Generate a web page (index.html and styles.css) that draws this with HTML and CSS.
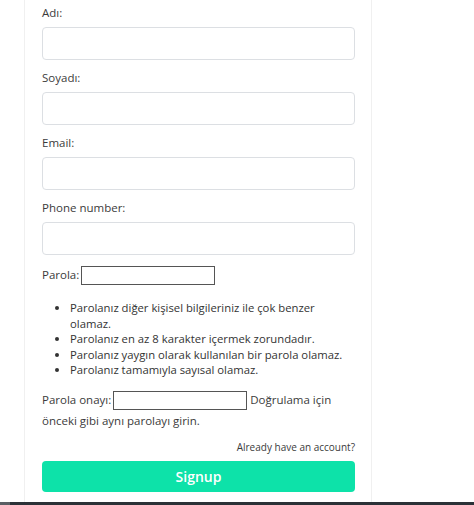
FILE: index.html
```html
<!DOCTYPE html>
<html lang="tr">
<head>
<meta charset="utf-8">
<title>Signup</title>
<link rel="stylesheet" href="styles.css">
</head>
<body>
<div class="page">
  <main class="card">
    <form class="form">
      <div class="field">
        <label class="field-label" for="ad">Adı:</label>
        <input class="text-input" id="ad" type="text">
      </div>
      <div class="field">
        <label class="field-label" for="soyad">Soyadı:</label>
        <input class="text-input" id="soyad" type="text">
      </div>
      <div class="field">
        <label class="field-label" for="email">Email:</label>
        <input class="text-input" id="email" type="email">
      </div>
      <div class="field">
        <label class="field-label" for="phone">Phone number:</label>
        <input class="text-input" id="phone" type="text">
      </div>
      <p class="pw-row"><label for="pw1">Parola:</label><input class="plain-input" id="pw1" type="password"></p>
      <ul class="help">
        <li>Parolanız diğer kişisel bilgileriniz ile çok benzer olamaz.</li>
        <li>Parolanız en az 8 karakter içermek zorundadır.</li>
        <li>Parolanız yaygın olarak kullanılan bir parola olamaz.</li>
        <li>Parolanız tamamıyla sayısal olamaz.</li>
      </ul>
      <p class="pw-row confirm"><label for="pw2">Parola onayı:</label><input class="plain-input" id="pw2" type="password"><span class="hint">Doğrulama için önceki gibi aynı parolayı girin.</span></p>
      <p class="login-link">Already have an account?</p>
      <button class="signup" type="button">Signup</button>
    </form>
  </main>
  <div class="bar"><span class="bar-start"></span></div>
</div>
</body>
</html>
```

FILE: styles.css
```css
* { box-sizing: border-box; }
html, body { margin: 0; padding: 0; background: #fff; }
body {
  font-family: "Open Sans", "Liberation Sans", sans-serif;
  color: #3b3b3b;
}
.page {
  height: 505px;
  display: flex;
  flex-direction: column;
}
.card {
  flex: 1;
  margin-left: 24px;
  width: 348px;
  border-left: 1px solid #f0f0f0;
  border-right: 1px solid #f0f0f0;
  padding: 4px 16px 0 17px;
}
.form { display: flex; flex-direction: column; }
.field { display: flex; flex-direction: column; margin-bottom: 9px; }
.field-label {
  font-size: 11.5px;
  line-height: 18px;
  margin-bottom: 5px;
}
.text-input {
  height: 33px;
  border: 1px solid #dcdfe3;
  border-radius: 4px;
  background: #fff;
  font: inherit;
}
.pw-row {
  margin: 0;
  font-size: 11.5px;
  line-height: 21px;
}
.plain-input {
  width: 134px;
  height: 19px;
  border: 1px solid #555;
  margin: 0 0 0 2px;
  vertical-align: middle;
  padding: 0;
  background: #fff;
}
.hint { margin-left: 3px; }
.help {
  margin: 15px 0 11px 0;
  padding-left: 28px;
  font-size: 11.3px;
  line-height: 15.5px;
  color: #333;
}
.confirm { line-height: 21px; }
.login-link {
  margin: 9px 0 7px 0;
  text-align: right;
  font-size: 10px;
  line-height: 14px;
}
.signup {
  height: 31px;
  border: none;
  border-radius: 4px;
  background: #0de2a9;
  color: #fff;
  font-family: inherit;
  font-weight: 600;
  font-size: 14px;
}
.bar {
  height: 3px;
  background: #2b3137;
  display: flex;
}
.bar-start { width: 10px; background: #5a5f64; }
```
